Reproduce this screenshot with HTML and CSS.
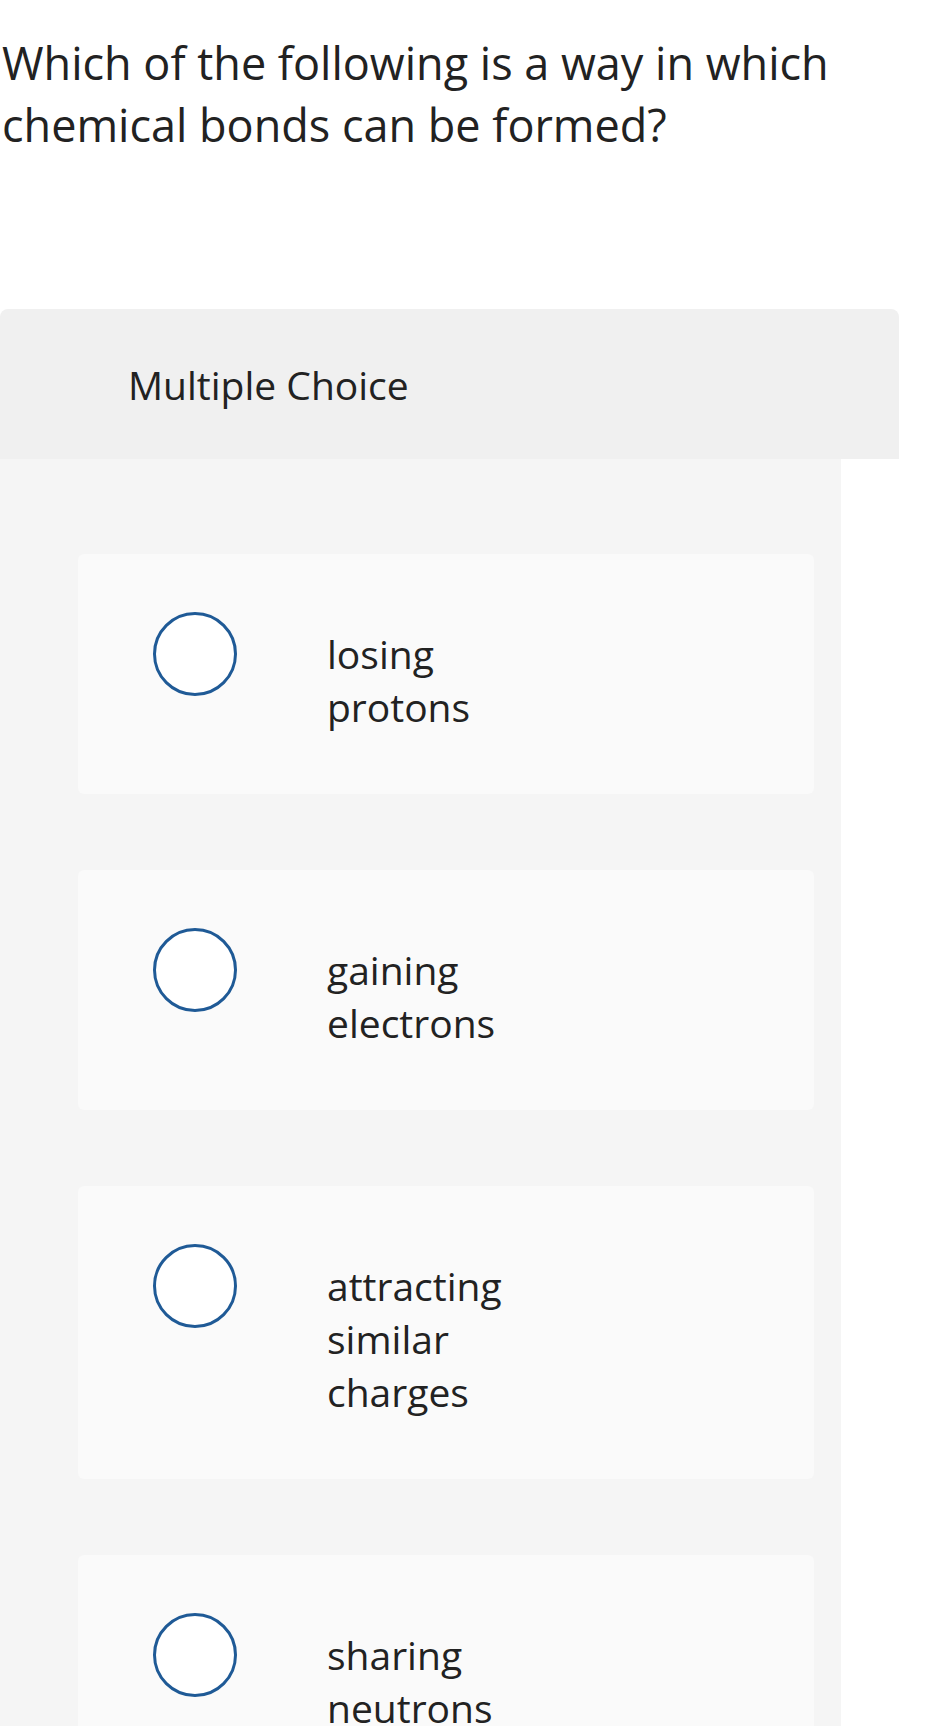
FILE: index.html
```html
<!DOCTYPE html>
<html lang="en">
<head>
    <meta charset="UTF-8">
    <meta name="viewport" content="width=device-width, initial-scale=1.0">
    <title>Question</title>
    <link rel="stylesheet" href="styles.css">
</head>
<body>
    <div class="question">
        <p class="prompt">Which of the following is a way in which chemical bonds can be formed?</p>
    </div>
    <div class="answer-head">
        <span>Multiple Choice</span>
    </div>
    <div class="answer-panel">
        <label class="option">
            <span class="radio"></span>
            <span class="option-text">losing protons</span>
        </label>
        <label class="option">
            <span class="radio"></span>
            <span class="option-text">gaining electrons</span>
        </label>
        <label class="option">
            <span class="radio"></span>
            <span class="option-text">attracting similar charges</span>
        </label>
        <label class="option">
            <span class="radio"></span>
            <span class="option-text">sharing neutrons</span>
        </label>
    </div>
</body>
</html>
```

FILE: styles.css
```css
body {
    margin: 0;
    padding: 0;
    font-family: "Open Sans", Lato, sans-serif;
    color: #222;
    background-color: #fff;
}
.question {
    padding: 32px 20px 0 2px;
    height: 309px;
    box-sizing: border-box;
}
.prompt {
    margin: 0;
    font-size: 45px;
    line-height: 62px;
    width: 900px;
}
.answer-head {
    width: 899px;
    height: 150px;
    background-color: #f0f0f0;
    border-radius: 8px 8px 0 0;
    display: flex;
    align-items: center;
    padding-left: 128px;
    box-sizing: border-box;
    font-size: 39px;
}
.answer-panel {
    width: 841px;
    background-color: #f5f5f5;
    padding: 95px 27px 76px 78px;
    box-sizing: border-box;
    display: flex;
    flex-direction: column;
    gap: 76px;
}
.option {
    display: flex;
    align-items: flex-start;
    background-color: #fafafa;
    border-radius: 6px;
    padding: 58px 0 61px 75px;
    cursor: pointer;
}
.radio {
    flex: none;
    width: 84px;
    height: 84px;
    box-sizing: border-box;
    border: 3px solid #1f5a96;
    border-radius: 50%;
    background-color: #fff;
}
.option-text {
    margin-left: 90px;
    padding-top: 15px;
    width: 210px;
    font-size: 39px;
    line-height: 53px;
}
```
